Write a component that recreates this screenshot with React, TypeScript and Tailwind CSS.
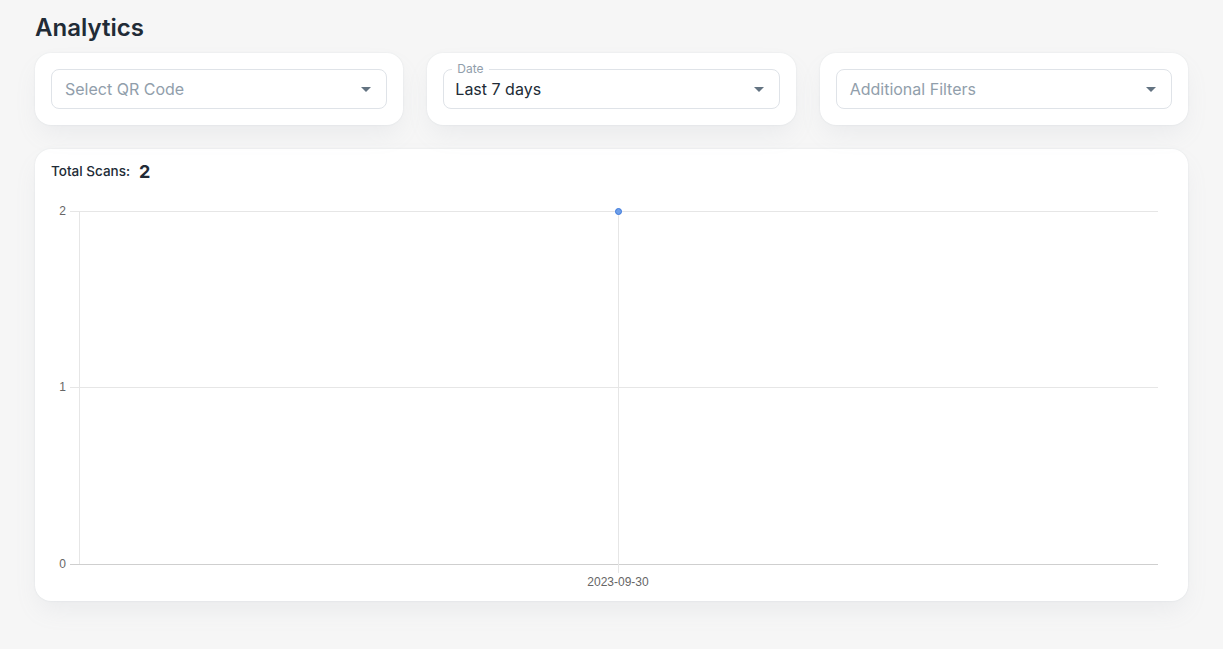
const ArrowDrop = () => (
  <svg width="24" height="24" viewBox="0 0 24 24" className="text-[#637381]">
    <path d="M7 10l5 5 5-5z" fill="currentColor" />
  </svg>
);

const SelectBox = ({ value, placeholder, label }: { value?: string; placeholder?: string; label?: string }) => (
  <div className="relative flex h-10 items-center justify-between rounded-lg border border-[#dfe3e8] pl-[13px] pr-[8px]">
    {label && (
      <span className="absolute -top-[9px] left-[8px] bg-white px-[5px] text-[12px] leading-[16px] text-[#919eab]">
        {label}
      </span>
    )}
    <span className={value ? "-ml-[2px] text-[16px] text-[#212b36]" : "text-[16px] text-[#919eab]"}>{value ?? placeholder}</span>
    <ArrowDrop />
  </div>
);

const Card = ({ children, className = "" }: { children: React.ReactNode; className?: string }) => (
  <div
    className={`rounded-2xl bg-white shadow-[0_0_2px_rgba(145,158,171,0.2),0_12px_24px_-4px_rgba(145,158,171,0.12)] ${className}`}
  >
    {children}
  </div>
);

const ScansChart = () => {
  const left = 28;
  const right = 1107;
  const ys = [
    { v: "2", y: 16 },
    { v: "1", y: 192 },
    { v: "0", y: 369 },
  ];
  const px = 567;
  return (
    <svg width="1120" height="400" className="block" style={{ fontFamily: "'Liberation Sans', Arial, sans-serif" }}>
      {ys.map((t) => (
        <g key={t.v}>
          <line x1={19} x2={right} y1={t.y + 0.5} y2={t.y + 0.5} stroke={t.v === "0" ? "#cfcfcf" : "#e6e6e6"} />
          <text x={15} y={t.y + 4} textAnchor="end" fontSize="12" fill="#666666">
            {t.v}
          </text>
        </g>
      ))}
      <line x1={left + 0.5} x2={left + 0.5} y1={16} y2={369} stroke="#e6e6e6" />
      <line x1={px + 0.5} x2={px + 0.5} y1={16} y2={378} stroke="#e6e6e6" />
      <text x={px} y={391} textAnchor="middle" fontSize="12" fill="#666666">
        2023-09-30
      </text>
      <circle cx={px + 0.5} cy={16.5} r={3} fill="#6f9fe8" stroke="#3b78dc" strokeWidth="1" />
    </svg>
  );
};

export default function App() {
  return (
    <div className="min-h-screen bg-[#f6f6f6] px-[35px] pt-[12px] pb-10" style={{ fontFamily: "Inter, 'Public Sans', sans-serif" }}>
      <h1 className="text-[24px] font-semibold leading-[32px] text-[#212b36]">Analytics</h1>

      <div className="mt-[9px] grid grid-cols-3 gap-6">
        <Card className="p-4">
          <SelectBox placeholder="Select QR Code" />
        </Card>
        <Card className="p-4">
          <SelectBox label="Date" value="Last 7 days" />
        </Card>
        <Card className="p-4">
          <SelectBox placeholder="Additional Filters" />
        </Card>
      </div>

      <Card className="mt-6 px-4 pt-[12px] pb-[6px]">
        <div className="flex items-center gap-[9px] h-[20px]">
          <span className="text-[13.5px] font-medium text-[#212b36]">Total Scans:</span>
          <span className="text-[18px] font-bold text-[#212b36]">2</span>
        </div>
        <div className="mt-[14px]">
          <ScansChart />
        </div>
      </Card>
    </div>
  );
}
